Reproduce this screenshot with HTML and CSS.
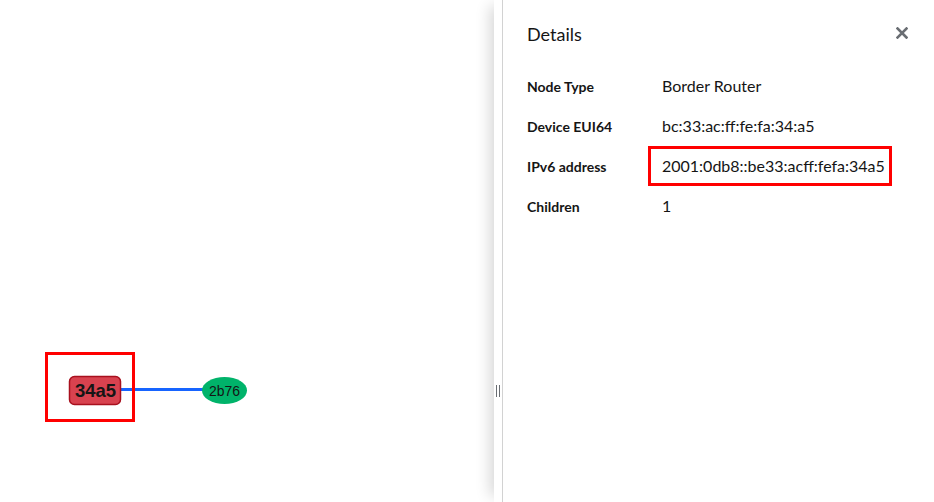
FILE: index.html
```html
<!DOCTYPE html>
<html>
<head>
<meta charset="utf-8">
<link rel="stylesheet" href="styles.css">
</head>
<body>
<div class="drawer">
  <div class="canvas">
    <svg class="graph" width="494" height="502" viewBox="0 0 494 502">
      <line x1="121" y1="389.5" x2="203" y2="389.5" stroke="#1764ff" stroke-width="3"/>
      <rect x="69.5" y="376.5" width="51" height="28" rx="5" ry="5" fill="#d8424f" stroke="#a8101e" stroke-width="1.5"/>
      <text x="95.5" y="397" text-anchor="middle" class="n1">34a5</text>
      <ellipse cx="224.5" cy="390.5" rx="22.5" ry="13.5" fill="#00b36a"/>
      <text x="224.5" y="395.5" text-anchor="middle" class="n2">2b76</text>
      <rect x="46.5" y="353.5" width="87" height="67" fill="none" stroke="#ff0000" stroke-width="3"/>
    </svg>
  </div>
  <div class="panel">
    <div class="splitter"><div class="handle"></div></div>
    <div class="body">
      <div class="head">
        <h2 class="title">Details</h2>
        <button class="close" aria-label="Close">
          <svg width="12" height="12" viewBox="0 0 12 12"><path d="M1.5 1.5 L10.5 10.5 M10.5 1.5 L1.5 10.5" stroke="#6a6e73" stroke-width="2.6" stroke-linecap="square" fill="none"/></svg>
        </button>
      </div>
      <dl class="list">
        <dt>Node Type</dt><dd>Border Router</dd>
        <dt>Device EUI64</dt><dd>bc:33:ac:ff:fe:fa:34:a5</dd>
        <dt>IPv6 address</dt><dd><span class="mark">2001:0db8::be33:acff:fefa:34a5</span></dd>
        <dt>Children</dt><dd>1</dd>
      </dl>
    </div>
  </div>
</div>
</body>
</html>
```
FILE: styles.css
```css
html, body {
  margin: 0;
  padding: 0;
  background: #fff;
}
body {
  font-family: Lato, "Noto Sans", sans-serif;
  color: #151515;
  width: 934px;
  height: 502px;
  overflow: hidden;
}
.drawer {
  display: flex;
  height: 502px;
}
.canvas {
  position: relative;
  flex: 1;
  background: #fff;
}
.graph {
  position: absolute;
  left: 0;
  top: 0;
}
.n1 {
  font-family: "Liberation Sans", Arial, sans-serif;
  font-weight: bold;
  font-size: 18.5px;
  fill: #151515;
}
.n2 {
  font-family: "Liberation Sans", Arial, sans-serif;
  font-size: 14px;
  fill: #151515;
}
.panel {
  width: 440px;
  display: flex;
  background: #fff;
  box-shadow: -10px 0 14px -6px rgba(3, 3, 3, 0.16);
  position: relative;
  z-index: 1;
}
.splitter {
  width: 9px;
  border-right: 1px solid #d2d2d2;
  display: flex;
  flex-direction: column;
  padding-top: 385px;
  box-sizing: border-box;
}
.handle {
  width: 4px;
  height: 12px;
  margin: 0 2px;
  box-sizing: border-box;
  border-left: 1px solid #6a6e73;
  border-right: 1px solid #6a6e73;
}
.body {
  flex: 1;
  padding: 22px 26px 24px 24px;
}
.head {
  display: flex;
  justify-content: space-between;
  align-items: flex-start;
}
.title {
  margin: 0;
  font-size: 18px;
  line-height: 24px;
  font-weight: 400;
}
.close {
  border: 0;
  background: none;
  padding: 0;
  margin-top: 5px;
  width: 12px;
  height: 12px;
  display: flex;
}
.list {
  margin: 28px 0 0 0;
  display: grid;
  grid-template-columns: 135px 1fr;
  row-gap: 16px;
  align-items: start;
}
.list dt {
  font-size: 14px;
  font-weight: 700;
  line-height: 22px;
  padding-top: 2px;
}
.list dd {
  margin: 0;
  font-size: 16px;
  line-height: 24px;
}
.mark {
  position: relative;
}
.mark::after {
  content: "";
  position: absolute;
  left: -14px;
  top: -10px;
  width: 244px;
  height: 40px;
  box-sizing: border-box;
  border: 3px solid #ff0000;
}
```
